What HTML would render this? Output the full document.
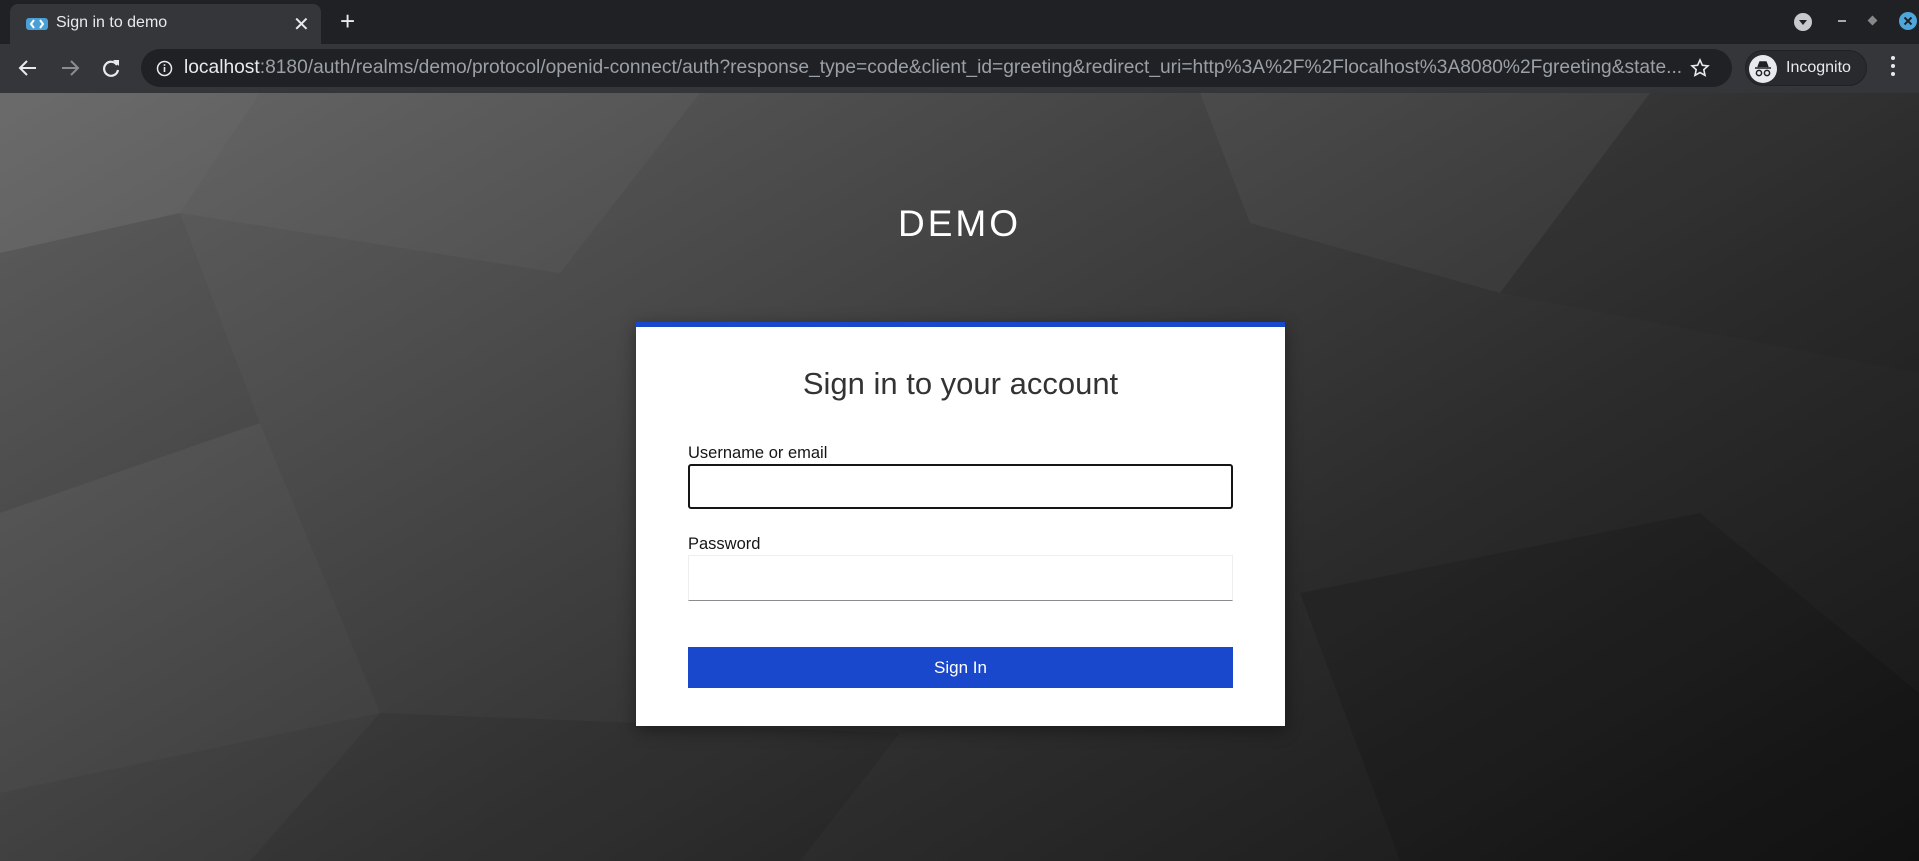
<!DOCTYPE html>
<html><head><meta charset="utf-8"><style>
*{margin:0;padding:0;box-sizing:border-box}
body{width:1919px;height:861px;overflow:hidden;font-family:"Liberation Sans",sans-serif;background:#202124;position:relative}
.tabbar{position:absolute;left:0;top:0;width:1919px;height:44px;background:#202124}
.tab{position:absolute;left:10px;top:4px;width:311px;height:40px;background:#35363a;border-radius:8px 8px 0 0}
.tab .t{position:absolute;left:46px;top:10px;color:#e8eaed;font-size:16px}
.tab .x{position:absolute;left:283px;top:8px;color:#e8eaed;font-size:20px}
.plus{position:absolute;left:340px;top:6px;color:#e8eaed;font-size:26px}
.toolbar{position:absolute;left:0;top:44px;width:1919px;height:49px;background:#35363a}
.url{position:absolute;left:141px;top:5px;width:1591px;height:38px;background:#202124;border-radius:19px}
.url .txt{position:absolute;left:43px;top:8px;font-size:19.2px;color:#9aa0a6;white-space:nowrap}
.url .txt b{font-weight:normal;color:#e8eaed}
.inc{position:absolute;left:1745px;top:6px;width:122px;height:36px;border:1px solid #202124;background:#292a2d;border-radius:18px}
.inc .c{position:absolute;left:3px;top:4px;width:28px;height:28px;border-radius:50%;background:#e8eaed}
.inc .t{position:absolute;left:40px;top:8px;color:#e8eaed;font-size:16px}
.page{position:absolute;left:0;top:93px;width:1919px;height:768px;background:linear-gradient(150deg,#636363 0%,#4a4a4a 30%,#2c2c2c 65%,#141414 100%);overflow:hidden}
.demo{position:absolute;left:0;width:1919px;top:110px;text-align:center;color:#fff;font-size:37px;letter-spacing:3px}
.card{position:absolute;left:636px;top:229px;width:649px;height:404px;background:#fff;border-top:5px solid #1a48cc;box-shadow:0 4px 16px rgba(0,0,0,.4)}
.card h1{position:absolute;left:0;width:100%;top:39px;text-align:center;font-weight:300;font-size:31px;color:#333}
.lbl{position:absolute;left:52px;font-size:16.5px;color:#151515}
.in{position:absolute;left:52px;width:545px}
.btn{position:absolute;left:52px;width:545px;top:320px;height:41px;background:#1a48cc;color:#fff;font-size:17px;text-align:center;line-height:41px}
</style></head><body>
<div class="tabbar">
<div class="tab"><svg style="position:absolute;left:16px;top:12px" width="22" height="16"><rect x="0" y="2" width="22" height="12" rx="3" fill="#4a9fd6"/><path d="M8 4 L5 8 L8 12 M14 4 L17 8 L14 12" stroke="#fff" stroke-width="2" fill="none"/></svg><span class="t">Sign in to demo</span><span class="x">✕</span></div>
<span class="plus">+</span>
<svg style="position:absolute;left:1793px;top:12px" width="20" height="20"><circle cx="10" cy="10" r="9" fill="#c8c9cb"/><path d="M6 8h8l-4 5z" fill="#202124"/></svg>
<div style="position:absolute;left:1838px;top:20px;width:8px;height:2px;background:#aaa"></div>
<div style="position:absolute;left:1869px;top:17px;width:7px;height:7px;background:#888;transform:rotate(45deg)"></div>
<svg style="position:absolute;left:1898px;top:11px" width="20" height="20"><circle cx="10" cy="10" r="9" fill="#4ea7dc"/><path d="M6.5 6.5l7 7M13.5 6.5l-7 7" stroke="#202124" stroke-width="2"/></svg>
</div>
<div class="toolbar">
<svg style="position:absolute;left:17px;top:14px" width="22" height="20"><path d="M19 10H4M10 3L3 10l7 7" stroke="#e8eaed" stroke-width="2" fill="none"/></svg>
<svg style="position:absolute;left:59px;top:14px" width="22" height="20"><path d="M3 10h15M12 3l7 7-7 7" stroke="#8a8c8f" stroke-width="2" fill="none"/></svg>
<svg style="position:absolute;left:100px;top:13px" width="22" height="22"><path d="M17 8A7 7 0 1 0 18 13" stroke="#e8eaed" stroke-width="2.2" fill="none"/><path d="M13 3h6v6z" fill="#e8eaed"/></svg>
<div class="url">
<svg style="position:absolute;left:15px;top:11px" width="17" height="17"><circle cx="8.5" cy="8.5" r="7" stroke="#e8eaed" stroke-width="1.5" fill="none"/><rect x="7.7" y="7" width="1.6" height="5" fill="#e8eaed"/><rect x="7.7" y="4.2" width="1.6" height="1.6" fill="#e8eaed"/></svg>
<div class="txt"><b>localhost</b>:8180/auth/realms/demo/protocol/openid-connect/auth?response_type=code&amp;client_id=greeting&amp;redirect_uri=http%3A%2F%2Flocalhost%3A8080%2Fgreeting&amp;state...</div>
<svg style="position:absolute;left:1549px;top:9px" width="20" height="20"><path d="M10 2l2.4 5.3 5.6.6-4.2 3.8 1.2 5.6L10 14.5 5 17.3l1.2-5.6L2 7.9l5.6-.6z" stroke="#e8eaed" stroke-width="1.6" fill="none"/></svg>
</div>
<div class="inc"><div class="c"><svg width="28" height="28"><path d="M6 13h16M9 12l2-5h6l2 5" fill="#202124" stroke="#202124" stroke-width="1.5"/><circle cx="10" cy="18" r="2.6" stroke="#202124" stroke-width="1.5" fill="none"/><circle cx="18" cy="18" r="2.6" stroke="#202124" stroke-width="1.5" fill="none"/></svg></div><span class="t">Incognito</span></div>
<div style="position:absolute;left:1891px;top:12px;width:4px;height:4px;border-radius:50%;background:#e8eaed;box-shadow:0 8px 0 #e8eaed,0 16px 0 #e8eaed"></div>
</div>
<div class="page">
<svg width="1919" height="768" style="position:absolute;left:0;top:0">
<polygon points="0,0 260,0 180,120 0,160" fill="#fff" opacity=".05"/>
<polygon points="260,0 700,0 560,180 180,120" fill="#fff" opacity=".03"/>
<polygon points="0,160 180,120 260,330 0,420" fill="#000" opacity=".04"/>
<polygon points="1200,0 1650,0 1500,200 1250,130" fill="#fff" opacity=".04"/>
<polygon points="1650,0 1919,0 1919,280 1500,200" fill="#000" opacity=".04"/>
<polygon points="1300,500 1700,420 1919,600 1919,768 1400,768" fill="#000" opacity=".12"/>
<polygon points="0,420 260,330 380,620 0,700" fill="#fff" opacity=".025"/>
<polygon points="380,620 900,640 800,768 250,768" fill="#000" opacity=".08"/>
</svg>
<div class="demo">DEMO</div>
<div class="card">
<h1>Sign in to your account</h1>
<div class="lbl" style="top:117px">Username or email</div>
<div class="in" style="top:137px;height:45px;border:2px solid #151515;border-radius:3px"></div>
<div class="lbl" style="top:208px">Password</div>
<div class="in" style="top:228px;height:46px;border:1px solid #eee;border-bottom:1px solid #8a8d90"></div>
<div class="btn">Sign In</div>
</div>
</div>
</body></html>
